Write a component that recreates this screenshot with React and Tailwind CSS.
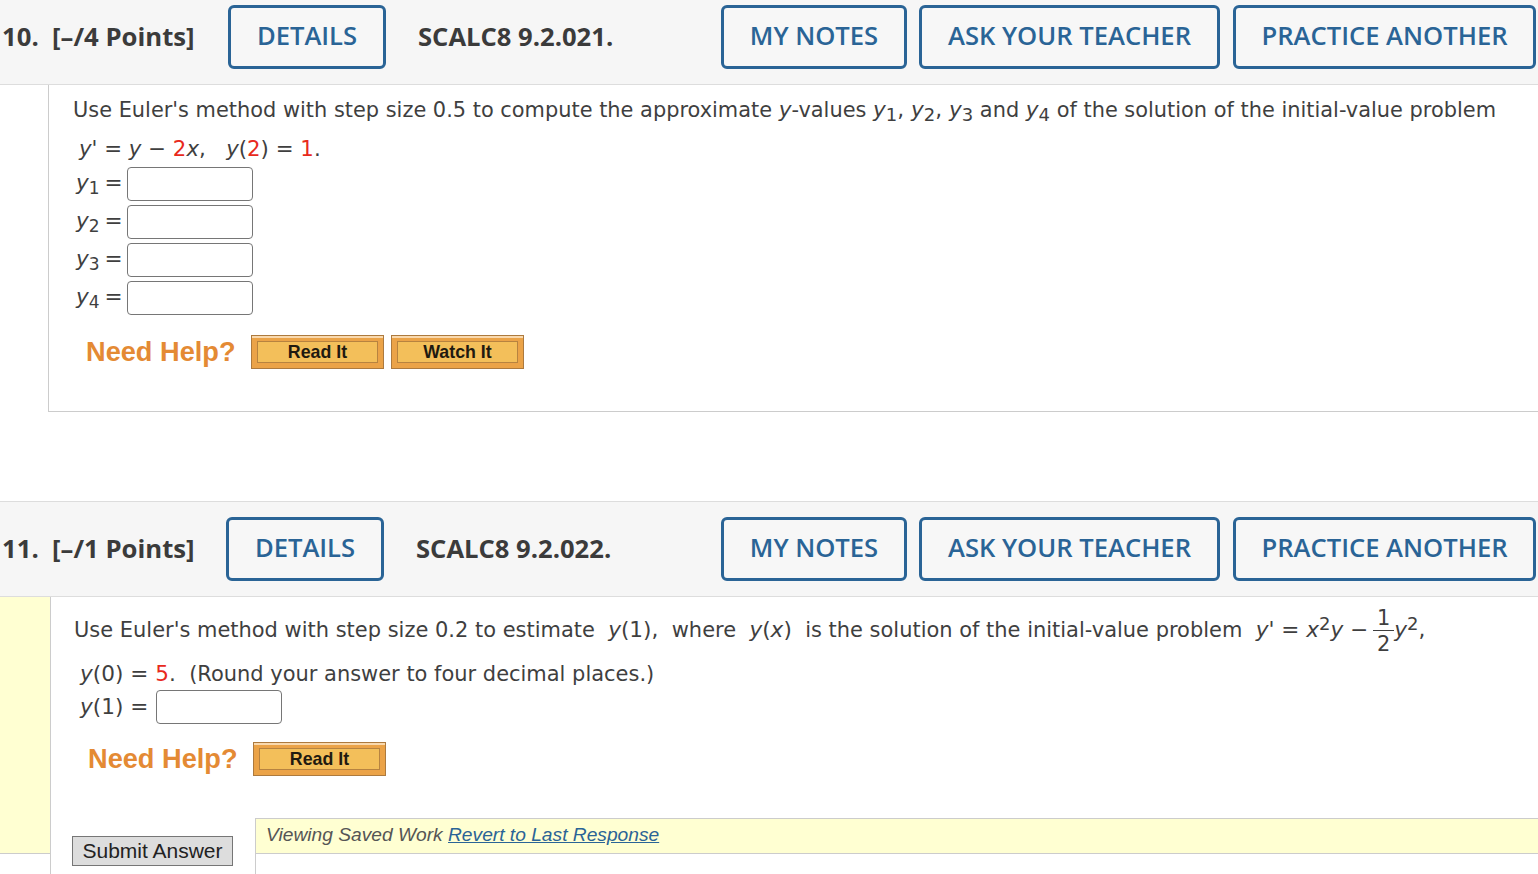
const body = { fontFamily: '"DejaVu Sans", Verdana, sans-serif' };
const head = { fontFamily: '"Open Sans", sans-serif' };
const helv = { fontFamily: '"Liberation Sans", Arial, sans-serif' };

function HBtn({ children, className = "" }) {
  return (
    <div className={"h-[64px] flex items-center justify-center border-[3px] border-[#2a6496] rounded-[6px] bg-[#f7f7f7] text-[#2a6496] text-[25.6px] font-semibold " + className}>
      <span className="-mt-[2px]">{children}</span>
    </div>
  );
}

function Header({ num, points, code, first }) {
  return (
    <div style={head} className={"flex items-center bg-[#f6f6f6] border-b border-[#dddddd] text-[#3b3b3b] " + (first ? "h-[85px] pb-[10px]" : "h-[96px] border-t")}>
      <div className={"pl-[2px] text-[25.7px] font-bold whitespace-nowrap " + (first ? "w-[228px]" : "w-[226px]")}>
        {num}.&nbsp; [–/{points} Points]
      </div>
      <HBtn className="w-[158px]">DETAILS</HBtn>
      <div className={"pl-[32px] text-[25.6px] font-bold whitespace-nowrap " + (first ? "w-[335px]" : "w-[337px]")}>{code}</div>
      <HBtn className="w-[186px]">MY NOTES</HBtn>
      <HBtn className="w-[301px] ml-[12px]">ASK YOUR TEACHER</HBtn>
      <HBtn className="w-[303px] ml-[13px]">PRACTICE ANOTHER</HBtn>
    </div>
  );
}

const I = ({ children }) => <i className="italic">{children}</i>;
const M = ({ children }) => <span className="text-[21.6px]">{children}</span>;
const R = ({ children }) => <span className="text-[#e8291c]">{children}</span>;
const Sub = ({ children }) => <span className="text-[18px] align-[-4px] leading-none">{children}</span>;
const Sup = ({ children }) => <span className="text-[18px] align-[7px] leading-none">{children}</span>;

function Field({ label, gap = "ml-[4px]" }) {
  return (
    <div className="flex items-center h-[38px]">
      <div className="whitespace-nowrap">{label}</div>
      <div className={"w-[126px] h-[34px] border border-[#767676] rounded-[4px] bg-white " + gap} />
    </div>
  );
}

function HelpBtn({ children }) {
  return (
    <div className="h-[34px] w-[133px] bg-[#eba348] border border-[#ad7a3e] shadow-[inset_0_2px_0_#f9d9ae] flex items-center justify-center p-[5px]">
      <div style={helv} className="w-full h-full bg-[#f3bf5a] border border-[#b78340] flex items-center justify-center text-[17.8px] font-bold text-[#1f1a10]">
        <span className="mt-[1px]">{children}</span>
      </div>
    </div>
  );
}

function NeedHelp({ children }) {
  return (
    <div className="flex items-center">
      <div style={helv} className="text-[27.2px] font-bold text-[#e48a34] leading-none w-[165px] whitespace-nowrap">Need Help?</div>
      <div className="flex gap-[7px]">{children}</div>
    </div>
  );
}

const YSub = ({ n }) => <M><I>y</I><span className="text-[17px] align-[-4px] leading-none">{n}</span> <span className="-ml-[2px]">=</span></M>;

export default function App() {
  return (
    <div style={body} className="w-[1538px] h-[874px] overflow-hidden bg-white text-[#3f3f3f] text-[20.9px] leading-none">
      <Header first num="10" points="4" code="SCALC8 9.2.021." />
      <div className="ml-[48px] h-[327px] border-l border-b border-[#cccccc] pl-[24px] pt-[14px]">
        <div className="h-[24px] whitespace-nowrap">
          Use Euler's method with step size 0.5 to compute the approximate <M><I>y</I></M>-values <M><I>y</I><Sub>1</Sub>, <I>y</I><Sub>2</Sub>, <I>y</I><Sub>3</Sub></M> and <M><I>y</I><Sub>4</Sub></M> of the solution of the initial-value problem
        </div>
        <div className="pl-[6px] mt-[15px] h-[24px] whitespace-nowrap text-[21.3px]">
          <I>y'</I> = <I>y</I> − <R>2</R><I>x</I>,&nbsp;&nbsp; <I>y</I>(<R>2</R>) = <R>1</R>.
        </div>
        <div className="pl-[3px] mt-[3px]">
          <Field label={<YSub n="1" />} />
          <Field label={<YSub n="2" />} />
          <Field label={<YSub n="3" />} />
          <Field label={<YSub n="4" />} />
        </div>
        <div className="pl-[13px] mt-[18px]">
          <NeedHelp>
            <HelpBtn>Read It</HelpBtn>
            <HelpBtn>Watch It</HelpBtn>
          </NeedHelp>
        </div>
      </div>
      <div className="h-[89px]" />
      <Header num="11" points="1" code="SCALC8 9.2.022." />
      <div className="flex h-[277px]">
        <div className="w-[51px] shrink-0 border-r border-[#cccccc]">
          <div className="h-[257px] bg-[#ffffd2] border-b border-[#cccccc]" />
        </div>
        <div className="flex-1 min-w-0 pl-[23px] text-[20.96px]">
          <div className="h-[66px] pt-[18px] flex items-start whitespace-nowrap">
            <div>Use Euler's method with step size 0.2 to estimate &nbsp;<M><I>y</I>(1),</M> &nbsp;where &nbsp;<M><I>y</I>(<I>x</I>)</M> &nbsp;is the solution of the initial-value problem &nbsp;<M><I>y'</I> = <I>x</I><Sup>2</Sup><I>y</I> − </M></div>
            <div className="flex flex-col items-center ml-[5px] -mt-[7px]">
              <span className="h-[22px]">1</span>
              <span className="w-[21px] border-t border-[#3f3f3f]"></span>
              <span className="h-[22px] pt-[3px]">2</span>
            </div>
            <div><M><I>y</I><Sup>2</Sup>,</M></div>
          </div>
          <div className="pl-[6px] h-[25px] whitespace-nowrap">
            <M><I>y</I>(0) = <R>5</R>.</M>&nbsp; (Round your answer to four decimal places.)
          </div>
          <div className="pl-[6px]">
            <Field gap="ml-[8px]" label={<M><I>y</I>(1) =</M>} />
          </div>
          <div className="pl-[14px] mt-[16px]">
            <NeedHelp>
              <HelpBtn>Read It</HelpBtn>
            </NeedHelp>
          </div>
          <div className="flex mt-[42px]">
            <div className="w-[183px] shrink-0 pt-[18px] -ml-[2px]">
              <div style={helv} className="w-[161px] h-[30px] pb-[2px] flex items-center justify-center bg-[#dddddd] border border-[#767676] text-[21px] text-[#222222]">
                Submit Answer
              </div>
            </div>
            <div className="flex-1 h-[56px] border-l border-[#cccccc]">
              <div style={helv} className="h-[36px] pb-[3px] bg-[#ffffd2] border-y border-[#cccccc] pl-[10px] flex items-center text-[19.2px] italic text-[#555555] whitespace-nowrap">
                Viewing Saved Work&nbsp;<span className="text-[#2a6496] underline">Revert to Last Response</span>
              </div>
            </div>
          </div>
        </div>
      </div>
    </div>
  );
}
